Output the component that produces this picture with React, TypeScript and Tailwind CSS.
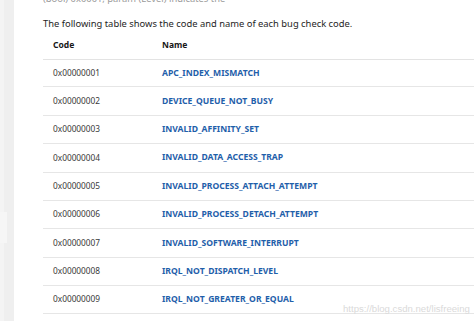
import React from "react";

const rows: [string, string][] = [
  ["0x00000001", "APC_INDEX_MISMATCH"],
  ["0x00000002", "DEVICE_QUEUE_NOT_BUSY"],
  ["0x00000003", "INVALID_AFFINITY_SET"],
  ["0x00000004", "INVALID_DATA_ACCESS_TRAP"],
  ["0x00000005", "INVALID_PROCESS_ATTACH_ATTEMPT"],
  ["0x00000006", "INVALID_PROCESS_DETACH_ATTEMPT"],
  ["0x00000007", "INVALID_SOFTWARE_INTERRUPT"],
  ["0x00000008", "IRQL_NOT_DISPATCH_LEVEL"],
  ["0x00000009", "IRQL_NOT_GREATER_OR_EQUAL"],
];

export default function App() {
  return (
    <div
      className="relative flex h-[321px] w-[474px] overflow-hidden bg-white"
      style={{ fontFamily: '"Noto Sans", "Open Sans", sans-serif' }}
    >
      {/* left rail */}
      <div className="flex h-full w-[14px] shrink-0 bg-[#efefef]">
        <div className="h-full w-[4px] bg-[#f4f4f4]" />
      </div>
      <div className="absolute left-0 top-[212px] h-[31px] w-[7px] bg-[#f6f6f6]" />

      {/* content */}
      <div className="flex flex-1 flex-col pl-[29px]">
        <div className="relative h-[8px] overflow-hidden">
          <div className="absolute -top-[7px] left-0 whitespace-nowrap text-[9.4px] leading-[12px] text-[#9a9a9a]">
            (bool) 0x0001, param (Level) indicates the
          </div>
        </div>
        <div className="flex h-[23px] items-end text-[9.4px] leading-[14px] text-[#1e1e1e]">
          The following table shows the code and name of each bug check code.
        </div>

        <div className="grid h-[29px] grid-cols-[109px_1fr] items-center border-b border-[#e3e3e3] text-[8.5px] font-bold text-[#171717]">
          <div className="pl-[10px]">Code</div>
          <div className="pl-[10px]">Name</div>
        </div>
        {rows.map(([code, name], i) => (
          <div
            key={code}
            className={
              i === 0
                ? "grid h-[27.4px] grid-cols-[109px_1fr] items-center border-b border-[#e6e6e6] text-[8.3px]"
                : "grid h-[28.375px] grid-cols-[109px_1fr] items-center border-b border-[#e6e6e6] text-[8.3px]"
            }
          >
            <div className="pl-[10px] text-[#3a3a3a]">{code}</div>
            <div className="pl-[10px] text-[8.6px] font-bold text-[#1f60aa]">{name}</div>
          </div>
        ))}
      </div>

      <div
        className="absolute left-[343px] top-[303px] whitespace-nowrap text-[9.6px] leading-[12px] text-[#dadada]"
        style={{ fontFamily: '"Liberation Sans", Arial, sans-serif' }}
      >
        https://blog.csdn.net/lisfreeing
      </div>
    </div>
  );
}
